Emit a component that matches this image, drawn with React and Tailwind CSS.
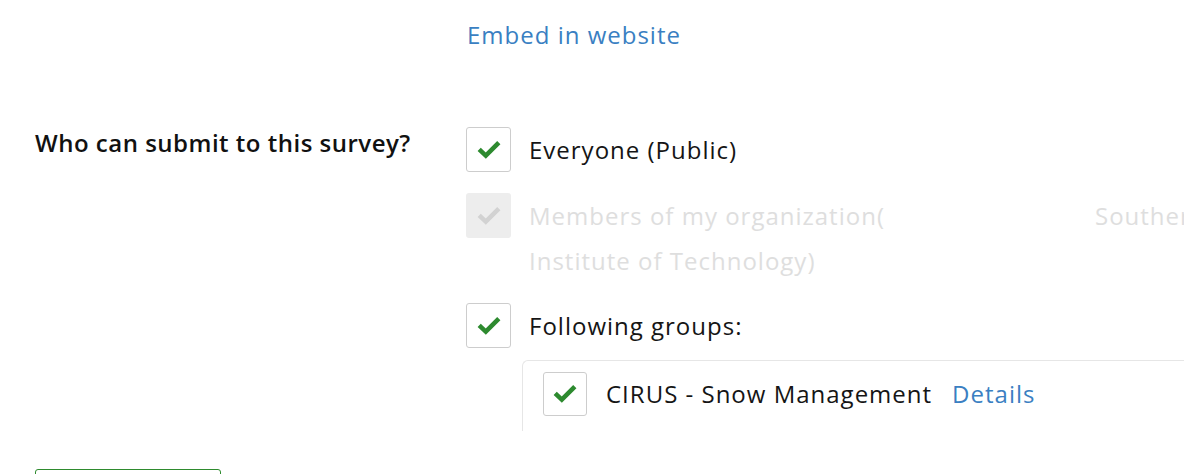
import React from "react";

function Check({ color = "#2d8a2f" }) {
  return (
    <svg width="24" height="19" viewBox="0 0 24 19" fill="none">
      <path d="M2.2 9.4 L8.8 15.6 L21.8 2.6" stroke={color} strokeWidth="4.6" strokeLinejoin="miter" strokeLinecap="butt" />
    </svg>
  );
}

function Box({ disabled = false, size = "w-[45px] h-[45px]" }) {
  return (
    <div
      className={
        disabled
          ? `${size} shrink-0 rounded-[3px] bg-[#ededed] flex items-center justify-center`
          : `${size} shrink-0 rounded-[3px] border border-[#cdcdcd] bg-white flex items-center justify-center`
      }
    >
      <Check color={disabled ? "#d2d2d2" : "#2d8a2f"} />
    </div>
  );
}

export default function App() {
  return (
    <div className="h-[474px] w-full overflow-hidden bg-white text-[24px] leading-[45px] tracking-[1px] text-[#151515] font-['Open_Sans','Lato',sans-serif]">
      <div className="pl-[467px] pt-[12px] text-[#3a7fc2]">Embed in website</div>

      <div className="flex mt-[63px]">
        <div className="w-[466px] shrink-0 pl-[35px] font-semibold tracking-[0.5px] text-[#111]">
          Who can submit to this survey?
        </div>

        <div className="flex-1 pt-[7px] flex flex-col">
          <div className="flex items-start gap-[18px] mb-[21px]">
            <Box />
            <div>Everyone (Public)</div>
          </div>

          <div className="flex items-start gap-[18px] mb-[20px]">
            <Box disabled />
            <div className="text-[#dedede] whitespace-nowrap">
              Members of my organization(
              <span className="inline-block w-[210px]"></span>
              Southern
              <br />
              Institute of Technology)
            </div>
          </div>

          <div className="flex items-start gap-[18px]">
            <Box />
            <div>Following groups:</div>
          </div>

          <div className="ml-[56px] mt-[12px] h-[71px] border-t border-l border-[#e6e6e6] rounded-tl-[6px] pl-[20px] pt-[10px]">
            <div className="flex items-center">
              <Box size="w-[44px] h-[44px]" />
              <span className="ml-[19px]">CIRUS - Snow Management</span>
              <span className="ml-[20px] text-[#3a7fc2]">Details</span>
            </div>
          </div>
        </div>
      </div>

      <button aria-label="Save" className="block ml-[35px] mt-[38px] w-[186px] h-[45px] rounded-[3px] border border-[#2e8b2e] bg-white"></button>
    </div>
  );
}
